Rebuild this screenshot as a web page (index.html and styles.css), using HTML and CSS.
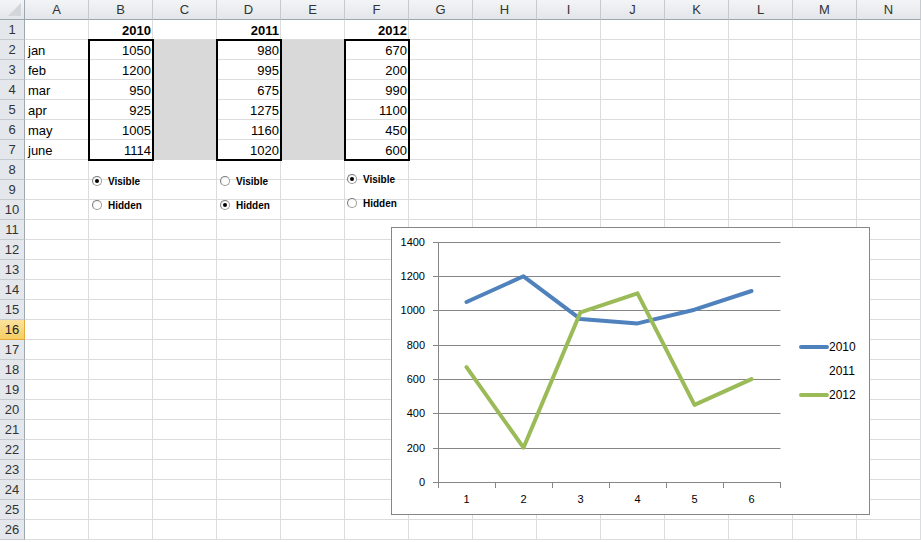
FILE: index.html
```html
<!DOCTYPE html>
<html>
<head>
<meta charset="utf-8">
<link rel="stylesheet" href="styles.css">
</head>
<body>
<div class="sheet">
  <div class="corner"></div>
  <div class="ch">A</div><div class="ch">B</div><div class="ch">C</div><div class="ch">D</div><div class="ch">E</div><div class="ch">F</div><div class="ch">G</div><div class="ch">H</div><div class="ch">I</div><div class="ch">J</div><div class="ch">K</div><div class="ch">L</div><div class="ch">M</div><div class="ch">N</div>
  <div class="rh">1</div><div class="rh">2</div><div class="rh">3</div><div class="rh">4</div><div class="rh">5</div><div class="rh">6</div><div class="rh">7</div><div class="rh">8</div><div class="rh">9</div><div class="rh">10</div><div class="rh">11</div><div class="rh">12</div><div class="rh">13</div><div class="rh">14</div><div class="rh">15</div><div class="rh sel">16</div><div class="rh">17</div><div class="rh">18</div><div class="rh">19</div><div class="rh">20</div><div class="rh">21</div><div class="rh">22</div><div class="rh">23</div><div class="rh">24</div><div class="rh">25</div><div class="rh">26</div>

  <div class="cells"></div>

  <div class="fill col-c"></div>
  <div class="fill col-e"></div>

  <div class="cell num bold cb r1">2010</div>
  <div class="cell num bold cd r1">2011</div>
  <div class="cell num bold cf r1">2012</div>

  <div class="cell ca r2">jan</div><div class="cell num cb r2">1050</div><div class="cell num cd r2">980</div><div class="cell num cf r2">670</div>
  <div class="cell ca r3">feb</div><div class="cell num cb r3">1200</div><div class="cell num cd r3">995</div><div class="cell num cf r3">200</div>
  <div class="cell ca r4">mar</div><div class="cell num cb r4">950</div><div class="cell num cd r4">675</div><div class="cell num cf r4">990</div>
  <div class="cell ca r5">apr</div><div class="cell num cb r5">925</div><div class="cell num cd r5">1275</div><div class="cell num cf r5">1100</div>
  <div class="cell ca r6">may</div><div class="cell num cb r6">1005</div><div class="cell num cd r6">1160</div><div class="cell num cf r6">450</div>
  <div class="cell ca r7">june</div><div class="cell num cb r7">1114</div><div class="cell num cd r7">1020</div><div class="cell num cf r7">600</div>

  <div class="box cb"></div>
  <div class="box cd"></div>
  <div class="box cf"></div>

  <div class="radios cb">
    <div class="radio"><span class="dot on"></span>Visible</div>
    <div class="radio"><span class="dot"></span>Hidden</div>
  </div>
  <div class="radios cd">
    <div class="radio"><span class="dot"></span>Visible</div>
    <div class="radio"><span class="dot on"></span>Hidden</div>
  </div>
  <div class="radios cf up">
    <div class="radio"><span class="dot on"></span>Visible</div>
    <div class="radio"><span class="dot"></span>Hidden</div>
  </div>

  <div class="chart">
    <svg width="480" height="289" viewBox="0 0 480 289" xmlns="http://www.w3.org/2000/svg">
      <rect x="0.5" y="0.5" width="478" height="287" fill="#fff" stroke="#868686"/>
      <g stroke="#868686" stroke-width="1" fill="none">
        <path d="M42 15.5H389.5M42 49.5H389.5M42 83.5H389.5M42 118.5H389.5M42 152.5H389.5M42 186.5H389.5M42 221.5H389.5M42 255.5H389.5"/>
        <path d="M47.5 15V256"/>
        <path d="M47.5 255V261M104.5 255V261M161.5 255V261M218.5 255V261M275.5 255V261M332.5 255V261M389.5 255V261"/>
      </g>
      <g class="axis" text-anchor="end">
        <text x="34" y="19">1400</text>
        <text x="34" y="53">1200</text>
        <text x="34" y="87">1000</text>
        <text x="34" y="122">800</text>
        <text x="34" y="156">600</text>
        <text x="34" y="190">400</text>
        <text x="34" y="225">200</text>
        <text x="34" y="259">0</text>
      </g>
      <g class="axis" text-anchor="middle">
        <text x="75.5" y="276">1</text>
        <text x="132.5" y="276">2</text>
        <text x="189.5" y="276">3</text>
        <text x="246.5" y="276">4</text>
        <text x="303.5" y="276">5</text>
        <text x="360.5" y="276">6</text>
      </g>
      <polyline points="75.5,75 132.5,49.3 189.5,92.1 246.5,96.4 303.5,82.7 360.5,64" fill="none" stroke="#4f81bd" stroke-width="4" stroke-linecap="round" stroke-linejoin="round"/>
      <polyline points="75.5,140.1 132.5,220.7 189.5,85.3 246.5,66.4 303.5,177.9 360.5,152.1" fill="none" stroke="#9bbb59" stroke-width="4" stroke-linecap="round" stroke-linejoin="round"/>
      <path d="M410 120H436" stroke="#4f81bd" stroke-width="4" stroke-linecap="round"/>
      <path d="M410 168H436" stroke="#9bbb59" stroke-width="4" stroke-linecap="round"/>
      <g class="legend">
        <text x="438" y="124">2010</text>
        <text x="438" y="148">2011</text>
        <text x="438" y="172">2012</text>
      </g>
    </svg>
  </div>
</div>
</body>
</html>
```
FILE: styles.css
```css
* { box-sizing: border-box; }
body {
  margin: 0;
  background: #fff;
  font-family: "Liberation Sans", Arial, sans-serif;
}
.sheet {
  position: relative;
  display: grid;
  grid-template-columns: 25px repeat(14, 64px);
  grid-template-rows: repeat(27, 20px);
  width: 921px;
}
.corner {
  grid-row: 1;
  grid-column: 1;
  position: relative;
  background: linear-gradient(#f3f4f6, #e3e6ea);
  border-right: 1px solid #9ea6ae;
  border-bottom: 1px solid #9ea6ae;
}
.corner::after {
  content: "";
  position: absolute;
  right: 3px;
  bottom: 3px;
  width: 13px;
  height: 13px;
  background: #d2d5da;
  clip-path: polygon(100% 0, 100% 100%, 0 100%);
}
.ch {
  grid-row: 1;
  background: linear-gradient(#f3f4f6, #e3e6ea);
  border-right: 1px solid #c6cacf;
  border-bottom: 1px solid #9ea6ae;
  text-align: center;
  font-size: 13px;
  line-height: 19px;
  color: #333;
}
.rh {
  grid-column: 1;
  background: #e4e7eb;
  border-right: 1px solid #9ea6ae;
  border-bottom: 1px solid #c6cacf;
  text-align: center;
  font-size: 13px;
  line-height: 20px;
  color: #333;
}
.rh.sel {
  background: linear-gradient(#fbe29d, #f6cd62);
  border-right-color: #e2a93a;
  border-bottom-color: #e2a93a;
  color: #222;
}
.cells {
  grid-column: 2 / -1;
  grid-row: 2 / -1;
  background-image:
    linear-gradient(to right, transparent 63px, #dadcdd 63px),
    linear-gradient(to bottom, transparent 19px, #dadcdd 19px);
  background-size: 64px 20px;
}
.ca { grid-column: 2; }
.cb { grid-column: 3; }
.cc { grid-column: 4; }
.cd { grid-column: 5; }
.ce { grid-column: 6; }
.cf { grid-column: 7; }
.r1 { grid-row: 2; }
.r2 { grid-row: 3; }
.r3 { grid-row: 4; }
.r4 { grid-row: 5; }
.r5 { grid-row: 6; }
.r6 { grid-row: 7; }
.r7 { grid-row: 8; }

.fill {
  grid-row: 3 / 9;
  background: #d9d9d9;
}
.col-c { grid-column: 4; }
.col-e { grid-column: 6; }

.cell {
  font-size: 13px;
  line-height: 20px;
  padding: 1px 3px 0 3px;
  color: #000;
  white-space: nowrap;
}
.num { text-align: right; padding-right: 2px; }
.bold { font-weight: bold; }

.box {
  grid-row: 3 / 9;
  margin: -1px;
  border: 2px solid #000;
  z-index: 1;
}

.radios {
  grid-row: 9 / 12;
  display: flex;
  flex-direction: column;
  gap: 12px;
  padding: 15px 0 0 3px;
  z-index: 2;
}
.radios.up { padding-top: 13px; padding-left: 2px; }
.radio {
  display: flex;
  align-items: center;
  gap: 6px;
  height: 12px;
  font-size: 10px;
  font-weight: bold;
  color: #000;
  white-space: nowrap;
}
.dot {
  position: relative;
  width: 10px;
  height: 10px;
  border-radius: 50%;
  border: 1px solid #9a9a9a;
  border-top-color: #7d7d7d;
  border-left-color: #7d7d7d;
  background: radial-gradient(circle at 60% 60%, #ffffff 40%, #e2e2e2 100%);
}
.dot.on::after {
  content: "";
  position: absolute;
  left: 2px;
  top: 2px;
  width: 4px;
  height: 4px;
  border-radius: 50%;
  background: #000;
}

.chart {
  position: absolute;
  left: 391px;
  top: 227px;
  width: 480px;
  height: 289px;
  z-index: 3;
}
.chart svg { display: block; }
.axis text {
  font-family: "Liberation Sans", Arial, sans-serif;
  font-size: 11px;
  fill: #000;
}
.legend text {
  font-family: "Liberation Sans", Arial, sans-serif;
  font-size: 12px;
  fill: #000;
}
```
